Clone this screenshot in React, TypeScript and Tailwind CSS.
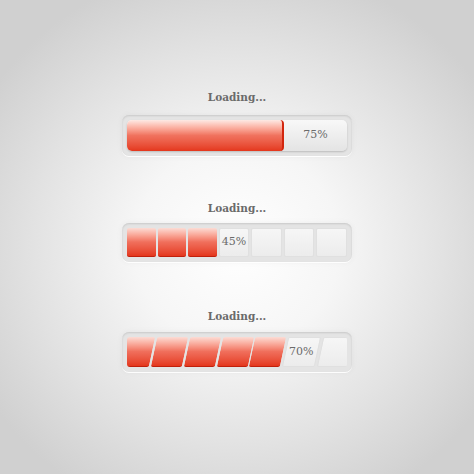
const SEGMENTS = 7;

function Label() {
  return (
    <p className="text-center font-['DejaVu_Serif',serif] text-[10.5px] font-bold leading-[14px] text-[#6a6a6a]">
      Loading...
    </p>
  );
}

function Track({ children }: { children: React.ReactNode }) {
  return (
    <div className="w-[230px] rounded-[7px] bg-[#e4e4e4] p-[5px] shadow-[inset_0_1px_2px_rgba(0,0,0,0.12),0_1px_0_rgba(255,255,255,0.9),0_0_6px_rgba(0,0,0,0.05)]">
      {children}
    </div>
  );
}

function SolidBar() {
  return (
    <Track>
      <div className="flex h-[31px] overflow-hidden rounded-[5px] bg-gradient-to-b from-[#f8f8f8] to-[#e4e4e4] shadow-[0_1px_2px_rgba(0,0,0,0.18)]">
        <div className="h-full w-[157px] rounded-[4px] border-r-2 border-[#d2260e] bg-gradient-to-b from-[#fde9e4] via-[#f0725e] to-[#e4361b]" />
        <div className="flex flex-1 items-center justify-center font-['DejaVu_Serif',serif] text-[11px] text-[#6a6a6a]">
          75%
        </div>
      </div>
    </Track>
  );
}

function BlockBar() {
  const filled = 3;
  return (
    <Track>
      <div className="flex h-[29px] gap-[2px]">
        {Array.from({ length: SEGMENTS }).map((_, i) => (
          <div
            key={i}
            className={
              i < filled
                ? 'flex-1 rounded-[2px] border-b border-[#c0200c] bg-gradient-to-b from-[#fbdcd5] via-[#f06f5c] to-[#e4361b]'
                : 'flex flex-1 items-center justify-center rounded-[2px] border border-[#e0e0e0] bg-gradient-to-b from-[#f6f6f6] to-[#ececec] font-["DejaVu_Serif",serif] text-[11px] text-[#6a6a6a]'
            }
          >
            {i === filled ? '45%' : null}
          </div>
        ))}
      </div>
    </Track>
  );
}

function SkewBar() {
  const filled = 5;
  return (
    <Track>
      <div className="h-[30px] overflow-hidden rounded-[3px]">
        <div className="mx-[-6px] flex h-full gap-[2px]">
          {Array.from({ length: SEGMENTS }).map((_, i) => (
            <div
              key={i}
              className={
                i < filled
                  ? '-skew-x-[12deg] flex-1 rounded-[2px] border-b border-[#c0200c] bg-gradient-to-b from-[#fbdcd5] via-[#f06f5c] to-[#e4361b]'
                  : '-skew-x-[12deg] flex flex-1 items-center justify-center rounded-[2px] border border-[#e0e0e0] bg-gradient-to-b from-[#f6f6f6] to-[#ececec]'
              }
            >
              {i === filled ? (
                <span className="skew-x-[12deg] font-['DejaVu_Serif',serif] text-[11px] text-[#6a6a6a]">70%</span>
              ) : null}
            </div>
          ))}
        </div>
      </div>
    </Track>
  );
}

export default function App() {
  return (
    <div className="flex h-[474px] w-[474px] flex-col items-center bg-[radial-gradient(ellipse_62%_60%_at_50%_52%,#ffffff_0%,#f6f6f6_35%,#e2e2e2_70%,#d0d0d0_100%)] pt-[90px]">
      <Label />
      <div className="mt-[11px]">
        <SolidBar />
      </div>
      <div className="mt-[45px]">
        <Label />
      </div>
      <div className="mt-[8px]">
        <BlockBar />
      </div>
      <div className="mt-[47px]">
        <Label />
      </div>
      <div className="mt-[9px]">
        <SkewBar />
      </div>
    </div>
  );
}
